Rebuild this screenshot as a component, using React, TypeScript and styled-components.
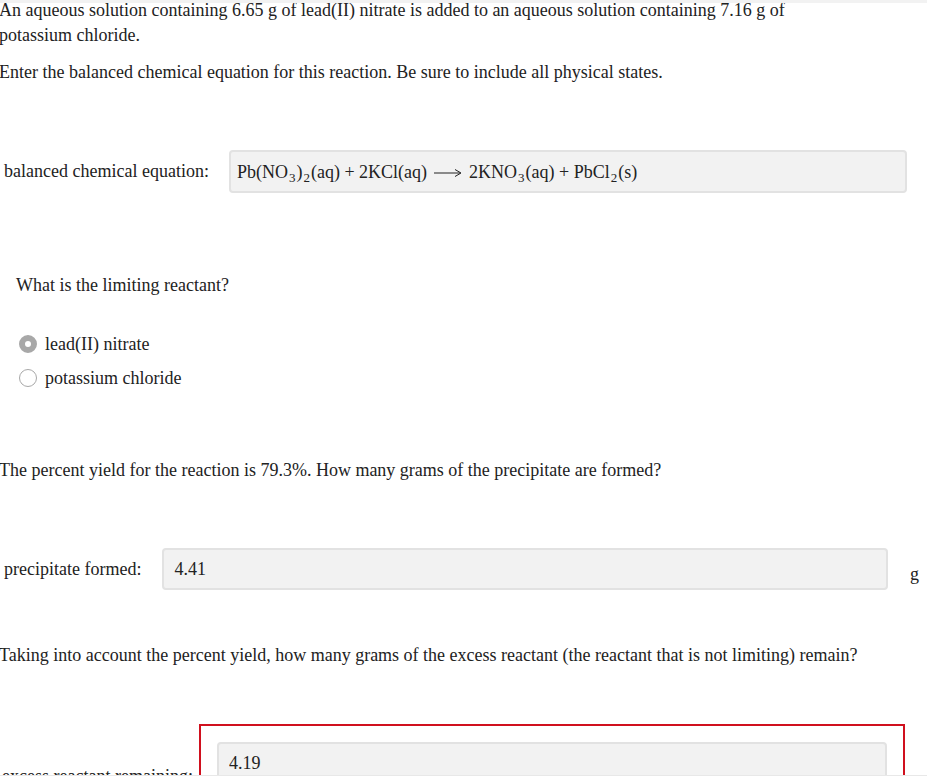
import React from "react";
import styled, { createGlobalStyle } from "styled-components";

const GlobalStyle = createGlobalStyle`
    html,
    body {
        margin: 0;
        padding: 0;
        background: #ffffff;
    }

    body {
        font-family: "Liberation Serif", "Times New Roman", serif;
        font-size: 18px;
        color: #222222;
        overflow: hidden;
    }
`;

const Arrow = () => (
    <svg width="28" height="10" viewBox="0 0 28 10" style={{ margin: "0 7px", verticalAlign: "middle" }}>
        <line x1="0" y1="5" x2="26" y2="5" stroke="#222" strokeWidth="1" />
        <path d="M21 1.5 L27 5 L21 8.5" fill="none" stroke="#222" strokeWidth="1" />
    </svg>
);

const RadioItem = ({ label, checked }: { label: string; checked?: boolean }) => (
    <StyledRadioRow>
        <StyledRadioDot $checked={checked} />
        <span>{label}</span>
    </StyledRadioRow>
);

const App = () => {
    return (
        <>
            <GlobalStyle />
            <StyledPage>
                <StyledTopEdge />
                <StyledContent>
                    <StyledPara>
                        An aqueous solution containing 6.65 g of lead(II) nitrate is added to an aqueous
                        solution containing 7.16 g of potassium chloride.
                    </StyledPara>
                    <StyledPara $top={12}>
                        Enter the balanced chemical equation for this reaction. Be sure to include all
                        physical states.
                    </StyledPara>

                    <StyledRow $top={65} $width={908}>
                        <StyledLabel $gap={20}>balanced chemical equation:</StyledLabel>
                        <StyledMathField>
                            <StyledFormula>
                                Pb(NO<sub>3</sub>)<sub>2</sub>(aq) + 2KCl(aq)
                                <Arrow />
                                2KNO<sub>3</sub>(aq) + PbCl<sub>2</sub>(s)
                            </StyledFormula>
                        </StyledMathField>
                    </StyledRow>

                    <StyledPara $top={80} $indent={17}>
                        What is the limiting reactant?
                    </StyledPara>

                    <StyledRadioList>
                        <RadioItem label="lead(II) nitrate" checked />
                        <RadioItem label="potassium chloride" />
                    </StyledRadioList>

                    <StyledPara $top={63}>
                        The percent yield for the reaction is 79.3%. How many grams of the precipitate are
                        formed?
                    </StyledPara>

                    <StyledRow $top={65}>
                        <StyledLabel $gap={21}>precipitate formed:</StyledLabel>
                        <StyledInput readOnly defaultValue="4.41" />
                        <StyledUnit $pad={22} $width={17}>
                            g
                        </StyledUnit>
                    </StyledRow>

                    <StyledPara $top={53}>
                        Taking into account the percent yield, how many grams of the excess reactant (the
                        reactant that is not limiting) remain?
                    </StyledPara>

                    <StyledRow $top={56}>
                        <StyledLabel $gap={0} $shift={-2}>excess reactant remaining:</StyledLabel>
                        <StyledErrorBox>
                            <StyledInput readOnly defaultValue="4.19" />
                        </StyledErrorBox>
                        <StyledUnit $pad={8} $width={14}>
                            g
                        </StyledUnit>
                    </StyledRow>
                </StyledContent>
                <StyledBottomEdge />
            </StyledPage>
        </>
    );
};

export default App;

const StyledPage = styled.div`
    position: relative;
    width: 927px;
    height: 776px;
    overflow: hidden;
`;

const StyledTopEdge = styled.div`
    position: absolute;
    top: 0;
    left: 0;
    right: 0;
    height: 3px;
    background-color: #f2f2f2;
    z-index: 2;
`;

const StyledBottomEdge = styled.div`
    position: absolute;
    bottom: 0;
    left: 0;
    right: 0;
    height: 1px;
    background-color: #e8e8e8;
    z-index: 2;
`;

const StyledContent = styled.div`
    margin-top: -2px;
    margin-left: -1px;
    width: 859px;
`;

const StyledPara = styled.p<{ $top?: number; $indent?: number }>`
    margin: ${({ $top }) => $top ?? 0}px 0 0;
    padding-left: ${({ $indent }) => $indent ?? 0}px;
    line-height: 25px;
`;

const StyledRow = styled.div<{ $top: number; $width?: number }>`
    margin-top: ${({ $top }) => $top}px;
    width: ${({ $width }) => ($width ? `${$width}px` : "928px")};
    display: flex;
    align-items: center;
`;

const StyledLabel = styled.span<{ $gap: number; $shift?: number }>`
    flex-shrink: 0;
    padding-left: 5px;
    margin-left: ${({ $shift }) => $shift ?? 0}px;
    margin-right: ${({ $gap }) => $gap}px;
    white-space: nowrap;
`;

const StyledMathField = styled.div`
    flex: 1;
    height: 43px;
    box-sizing: border-box;
    padding: 0 6px;
    display: flex;
    align-items: center;

    background-color: #f2f2f2;
    border: 2px solid #e2e2e2;
    border-radius: 4px;
`;

const StyledFormula = styled.span`
    white-space: nowrap;
    line-height: 24px;

    sub {
        font-size: 13px;
        vertical-align: -4px;
        line-height: 0;
        margin: 0 1px;
    }
`;

const StyledInput = styled.input`
    all: unset;
    flex: 1;
    min-width: 0;
    height: 42px;
    box-sizing: border-box;
    padding: 0 10px;

    font-family: "Liberation Serif", "Times New Roman", serif;
    font-size: 18px;
    color: #222222;

    background-color: #f2f2f2;
    border: 2px solid #e2e2e2;
    border-radius: 4px;
`;

const StyledUnit = styled.span<{ $pad: number; $width: number }>`
    flex-shrink: 0;
    width: ${({ $width }) => $width}px;
    padding-left: ${({ $pad }) => $pad}px;
    padding-top: 10px;
`;

const StyledErrorBox = styled.div`
    flex: 1;
    display: flex;
    padding: 16px 16px 42px;
    border: 2px solid #d0101e;
    margin-left: 6px;
`;

const StyledRadioList = styled.div`
    margin-top: 29px;
    padding-left: 20px;
`;

const StyledRadioRow = styled.div`
    height: 34px;
    display: flex;
    align-items: center;
    gap: 8px;
`;

const StyledRadioDot = styled.span<{ $checked?: boolean }>`
    width: 18px;
    height: 18px;
    box-sizing: border-box;
    border-radius: 50%;
    background-color: #ffffff;
    border: ${({ $checked }) => ($checked ? "6px solid #a8a8a8" : "1.5px solid #a8a8a8")};
`;
